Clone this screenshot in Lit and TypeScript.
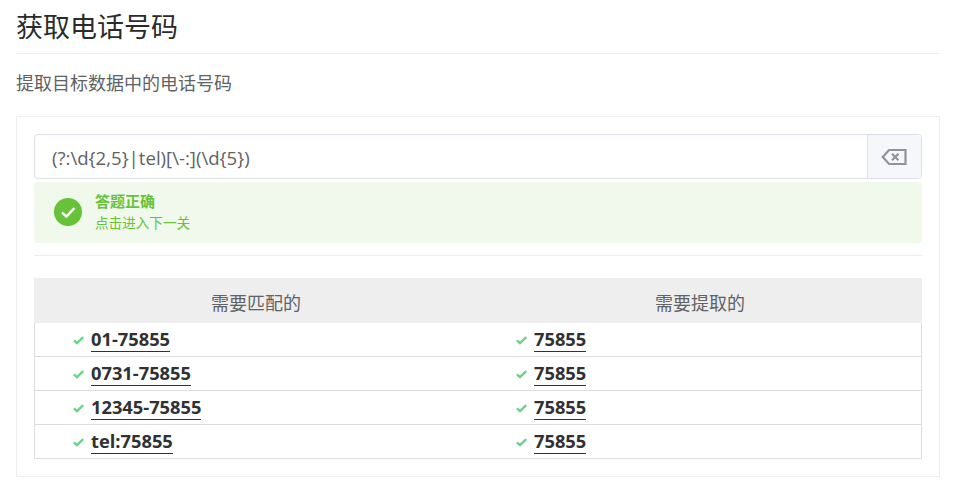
import { LitElement, html, css } from "lit";
import { customElement } from "lit/decorators.js";

const rows = [
  ["01-75855", "75855"],
  ["0731-75855", "75855"],
  ["12345-75855", "75855"],
  ["tel:75855", "75855"],
];

const check = html`<svg class="tick" viewBox="0 0 11 9" aria-hidden="true"><path d="M.9 4.3 4 7.2 10.2 1.2" fill="none" stroke="#67d38a" stroke-width="2.3"/></svg>`;

@customElement("app-root")
export class AppRoot extends LitElement {
  static styles = css`
    :host {
      display: block;
      box-sizing: border-box;
      width: 959px;
      height: 493px;
      padding: 0 19px 16px 16px;
      background: #fff;
      overflow: hidden;
      font-family: "Open Sans", "Noto Sans CJK SC", sans-serif;
      color: #303133;
    }
    * { box-sizing: border-box; }
    h1 {
      margin: 0;
      height: 54px;
      border-bottom: 1px solid #eeeeee;
      padding-top: 7px;
      font-size: 27px;
      line-height: 38px;
      font-weight: 400;
      font-family: "Noto Sans CJK SC", sans-serif;
      color: #2b2b2b;
    }
    .desc {
      margin: 0;
      height: 62px;
      padding-top: 15px;
      font-size: 18px;
      line-height: 26px;
      font-family: "Noto Sans CJK SC", sans-serif;
      color: #606266;
    }
    .card {
      border: 1px solid #eeeeee;
      height: 361px;
      padding: 17px 17px;
    }
    .input {
      display: flex;
      height: 45px;
      border: 1px solid #dcdfe6;
      border-radius: 4px;
      overflow: hidden;
    }
    .value {
      flex: 1;
      padding-left: 17px;
      font-size: 18.6px;
      line-height: 45px;
      color: #606266;
    }
    .clear {
      width: 54px;
      background: #f5f7fa;
      border-left: 1px solid #dcdfe6;
      display: flex;
      align-items: center;
      justify-content: center;
    }
    .clear svg { width: 26px; height: 18px; margin-left: -2px; }
    .alert {
      display: flex;
      align-items: center;
      gap: 13px;
      margin-top: 3px;
      height: 61px;
      padding-left: 20px;
      background: #f0f9eb;
      border-radius: 4px;
      font-family: "Noto Sans CJK SC", sans-serif;
      color: #67c23a;
    }
    .alert svg { width: 28px; height: 28px; flex: none; margin-top: -2px; }
    .alert-text { display: flex; flex-direction: column; gap: 3px; margin-top: -2px; }
    .alert b { font-size: 15px; line-height: 18px; font-weight: 700; }
    .alert span { font-size: 13.6px; line-height: 18px; }
    .rule { height: 1px; background: #eeeeee; margin: 12px 0 22px; }
    .table { border: 1px solid #dddddd; border-top: 0; }
    .head {
      display: grid;
      grid-template-columns: 1fr 1fr;
      height: 45px;
      margin: 0 -1px;
      background: #eeeeee;
      font-size: 18px;
      line-height: 49px;
      text-align: center;
      font-family: "Noto Sans CJK SC", sans-serif;
      color: #606266;
    }
    .row {
      display: grid;
      grid-template-columns: 1fr 1fr;
      height: 34px;
      border-bottom: 1px solid #dddddd;
    }
    .row:last-child { height: 33px; border-bottom: 0; }
    .cell {
      display: flex;
      align-items: center;
      gap: 7px;
      padding-left: 38px;
      height: 33px;
    }
    .tick { width: 11px; height: 9px; flex: none; margin-top: 1px; }
    .text {
      font-size: 18.3px;
      line-height: 24px;
      font-weight: 700;
      color: #303133;
      border-bottom: 1px solid #303133;
    }
  `;

  render() {
    return html`
      <h1>获取电话号码</h1>
      <p class="desc">提取目标数据中的电话号码</p>
      <section class="card">
        <div class="input">
          <div class="value">(?:\\d{2,5}|tel)[\\-:](\\d{5})</div>
          <div class="clear">
            <svg viewBox="0 0 26 18" aria-hidden="true">
              <path d="M8 2H24.5V16H8L1.8 9Z" fill="none" stroke="#909399" stroke-width="2.2"/>
              <path d="M11 5.8 17.4 12.2M17.4 5.8 11 12.2" stroke="#909399" stroke-width="2.2" fill="none"/>
            </svg>
          </div>
        </div>
        <div class="alert">
          <svg viewBox="0 0 28 28" aria-hidden="true">
            <circle cx="14" cy="14" r="14" fill="#67c23a"/>
            <path d="M8 14.5 12.4 18.6 20.4 10.2" fill="none" stroke="#fff" stroke-width="2.4"/>
          </svg>
          <div class="alert-text"><b>答题正确</b><span>点击进入下一关</span></div>
        </div>
        <div class="rule"></div>
        <div class="table">
          <div class="head"><div>需要匹配的</div><div>需要提取的</div></div>
          ${rows.map(
            (r) => html`<div class="row">
              ${r.map((c) => html`<div class="cell">${check}<span class="text">${c}</span></div>`)}
            </div>`
          )}
        </div>
      </section>
    `;
  }
}
